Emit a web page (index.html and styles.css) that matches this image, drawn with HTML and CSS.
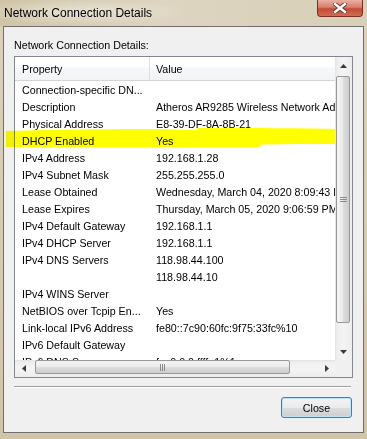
FILE: index.html
```html
<!DOCTYPE html>
<html>
<head>
<meta charset="utf-8">
<link rel="stylesheet" href="styles.css">
</head>
<body>
<div class="window">
  <div class="titlebar">
    <span class="title">Network Connection Details</span>
    <div class="close-x">
      <svg width="14" height="10" viewBox="0 0 14 10">
        <path d="M2 1 L12 9 M12 1 L2 9" stroke="#5a3a35" stroke-width="4.2" stroke-linecap="square" fill="none"/>
        <path d="M2 1 L12 9 M12 1 L2 9" stroke="#ffffff" stroke-width="2.4" stroke-linecap="square" fill="none"/>
      </svg>
    </div>
  </div>
  <div class="client">
    <div class="label">Network Connection Details:</div>
    <div class="listbox">
      <div class="viewport">
        <div class="header">
          <div class="hcell c1">Property</div>
          <div class="hcell c2">Value</div>
        </div>
        <div class="row"><span class="c1">Connection-specific DN...</span><span class="c2"></span></div>
        <div class="row"><span class="c1">Description</span><span class="c2">Atheros AR9285 Wireless Network Adapter</span></div>
        <div class="row"><span class="c1">Physical Address</span><span class="c2">E8-39-DF-8A-8B-21</span></div>
        <div class="row"><span class="c1">DHCP Enabled</span><span class="c2">Yes</span></div>
        <div class="row"><span class="c1">IPv4 Address</span><span class="c2">192.168.1.28</span></div>
        <div class="row"><span class="c1">IPv4 Subnet Mask</span><span class="c2">255.255.255.0</span></div>
        <div class="row"><span class="c1">Lease Obtained</span><span class="c2">Wednesday, March 04, 2020 8:09:43 PM</span></div>
        <div class="row"><span class="c1">Lease Expires</span><span class="c2">Thursday, March 05, 2020 9:06:59 PM</span></div>
        <div class="row"><span class="c1">IPv4 Default Gateway</span><span class="c2">192.168.1.1</span></div>
        <div class="row"><span class="c1">IPv4 DHCP Server</span><span class="c2">192.168.1.1</span></div>
        <div class="row"><span class="c1">IPv4 DNS Servers</span><span class="c2">118.98.44.100</span></div>
        <div class="row"><span class="c1"></span><span class="c2">118.98.44.10</span></div>
        <div class="row"><span class="c1">IPv4 WINS Server</span><span class="c2"></span></div>
        <div class="row"><span class="c1">NetBIOS over Tcpip En...</span><span class="c2">Yes</span></div>
        <div class="row"><span class="c1">Link-local IPv6 Address</span><span class="c2">fe80::7c90:60fc:9f75:33fc%10</span></div>
        <div class="row"><span class="c1">IPv6 Default Gateway</span><span class="c2"></span></div>
        <div class="row"><span class="c1">IPv6 DNS Server</span><span class="c2">fec0:0:0:ffff::1%1</span></div>
      </div>
      <div class="vscroll">
        <div class="sb-btn">
          <svg width="7" height="4" viewBox="0 0 7 4"><polygon points="0,4 3.5,0 7,4" fill="#3a3a3a"/></svg>
        </div>
        <div class="vthumb">
          <svg width="7" height="6" viewBox="0 0 7 6">
            <path d="M0 0.5 H7 M0 2.5 H7 M0 4.5 H7" stroke="#8a8a8a" stroke-width="1"/>
          </svg>
        </div>
        <div class="spacer"></div>
        <div class="sb-btn">
          <svg width="7" height="4" viewBox="0 0 7 4"><polygon points="0,0 7,0 3.5,4" fill="#3a3a3a"/></svg>
        </div>
      </div>
      <div class="hscroll">
        <div class="sb-btn h">
          <svg width="4" height="7" viewBox="0 0 4 7"><polygon points="4,0 4,7 0,3.5" fill="#3a3a3a"/></svg>
        </div>
        <div class="hthumb">
          <svg width="6" height="7" viewBox="0 0 6 7">
            <path d="M0.5 0 V7 M2.5 0 V7 M4.5 0 V7" stroke="#8a8a8a" stroke-width="1"/>
          </svg>
        </div>
        <div class="spacer"></div>
        <div class="sb-btn h">
          <svg width="4" height="7" viewBox="0 0 4 7"><polygon points="0,0 4,3.5 0,7" fill="#3a3a3a"/></svg>
        </div>
      </div>
      <div class="corner"></div>
    </div>
    <div class="sep"></div>
    <div class="buttons">
      <button class="btn">Close</button>
    </div>
  </div>
  <svg class="highlight" width="367" height="439" viewBox="0 0 367 439">
    <path d="M6 131 C40 130 100 129 155 129 L196 130 L198 128 C250 128 300 128 335 129 L335 144 C310 144 285 144 262 144.5 L259 147 C200 147 100 147.5 6 147 Z" fill="#ffff00"/>
  </svg>
</div>
</body>
</html>
```
FILE: styles.css
```css
body {
  margin: 0;
  background: #d6cdb4;
  font-family: "Liberation Sans", Arial, sans-serif;
  color: #000;
}

.window {
  position: relative;
  width: 367px;
  height: 439px;
  overflow: hidden;
  background: linear-gradient(to bottom, #dad2bc, #d0c5a8);
}

.titlebar {
  height: 26px;
  display: flex;
  justify-content: space-between;
  align-items: flex-start;
  background:
    radial-gradient(ellipse 110px 13px at 80px 12px, rgba(255, 255, 255, 0.45), rgba(255, 255, 255, 0)),
    linear-gradient(to right, #cfc4a6, #ddd5c0 45%, #d8cfb8);
}

.title {
  font-size: 12px;
  line-height: 14px;
  margin: 6px 0 0 4px;
  white-space: nowrap;
}

.close-x {
  width: 46px;
  height: 17px;
  margin-right: 4px;
  box-sizing: border-box;
  border: 1px solid #7a2e24;
  border-top: none;
  border-radius: 0 0 4px 4px;
  background: linear-gradient(#eab0a2, #d87e6c 45%, #c44a36 55%, #d26c52);
  display: flex;
  justify-content: center;
  align-items: center;
}

.client {
  margin-left: 3px;
  width: 361px;
  height: 407px;
  box-sizing: border-box;
  border: 1px solid #6f6f6f;
  background: #f0f0f0;
  font-size: 10.7px;
}

.label {
  line-height: 14px;
  margin: 11px 0 0 10px;
}

.listbox {
  margin: 4px 0 0 10px;
  width: 339px;
  height: 322px;
  box-sizing: border-box;
  border: 1px solid #828790;
  background: #fff;
  display: grid;
  grid-template-columns: 320px 17px;
  grid-template-rows: 303px 17px;
}

.viewport {
  grid-column: 1;
  grid-row: 1;
  overflow: hidden;
}

.header {
  display: flex;
  height: 24px;
  box-sizing: border-box;
  border-bottom: 1px solid #d5d5d5;
  background: linear-gradient(#ffffff 0%, #ffffff 45%, #f7f8f9 46%, #f2f3f5 100%);
}

.hcell {
  line-height: 24px;
  white-space: nowrap;
}

.header .c1 {
  width: 135px;
  flex: none;
  box-sizing: border-box;
  padding-left: 7px;
  border-right: 1px solid #dcdee2;
}

.header .c2 {
  padding-left: 6px;
  flex: 1;
}

.row {
  display: flex;
  height: 17px;
  line-height: 18px;
  white-space: nowrap;
}

.row .c1 {
  width: 135px;
  flex: none;
  box-sizing: border-box;
  padding-left: 7px;
  overflow: hidden;
}

.row .c2 {
  padding-left: 6px;
}

.vscroll {
  grid-column: 2;
  grid-row: 1;
  display: flex;
  flex-direction: column;
  background: linear-gradient(to right, #e3e3e3, #eeeeee 2px, #f4f4f4 50%, #ededed);
}

.sb-btn {
  height: 17px;
  flex: none;
  display: flex;
  align-items: center;
  justify-content: center;
}

.sb-btn.h {
  width: 17px;
  height: 17px;
}

.vthumb {
  margin: 2px 0 0 1px;
  width: 14px;
  height: 247px;
  flex: none;
  box-sizing: border-box;
  border: 1px solid #979797;
  border-radius: 2px;
  background: linear-gradient(to right, #f5f5f5, #ececec 45%, #dcdcdc 55%, #cdcdcd);
  display: flex;
  align-items: center;
  justify-content: center;
}

.spacer {
  flex: 1;
}

.hscroll {
  grid-column: 1;
  grid-row: 2;
  display: flex;
  background: linear-gradient(#e3e3e3, #eeeeee 2px, #f4f4f4 50%, #ededed);
}

.hthumb {
  margin: 0 0 0 3px;
  width: 255px;
  height: 14px;
  flex: none;
  box-sizing: border-box;
  border: 1px solid #979797;
  border-radius: 2px;
  background: linear-gradient(#f5f5f5, #ececec 45%, #dcdcdc 55%, #cdcdcd);
  display: flex;
  align-items: center;
  justify-content: center;
}

.corner {
  grid-column: 2;
  grid-row: 2;
  background: #f0f0f0;
}

.sep {
  margin: 8px 0 0 10px;
  width: 337px;
  height: 1px;
  background: #a0a0a0;
  border-bottom: 1px solid #ffffff;
}

.buttons {
  display: flex;
  justify-content: flex-end;
  margin-top: 9px;
  padding-right: 11px;
}

.btn {
  width: 71px;
  height: 21px;
  box-sizing: border-box;
  padding: 0;
  font-family: "Liberation Sans", Arial, sans-serif;
  font-size: 10.7px;
  color: #000;
  border: 1px solid #3c7fb1;
  border-radius: 3px;
  box-shadow: inset 0 0 0 1px #b9e4f8;
  background: linear-gradient(#f3f3f3 0%, #ebebeb 50%, #dddddd 51%, #cfcfcf 100%);
}

.highlight {
  position: absolute;
  left: 0;
  top: 0;
  pointer-events: none;
  mix-blend-mode: multiply;
}
```
